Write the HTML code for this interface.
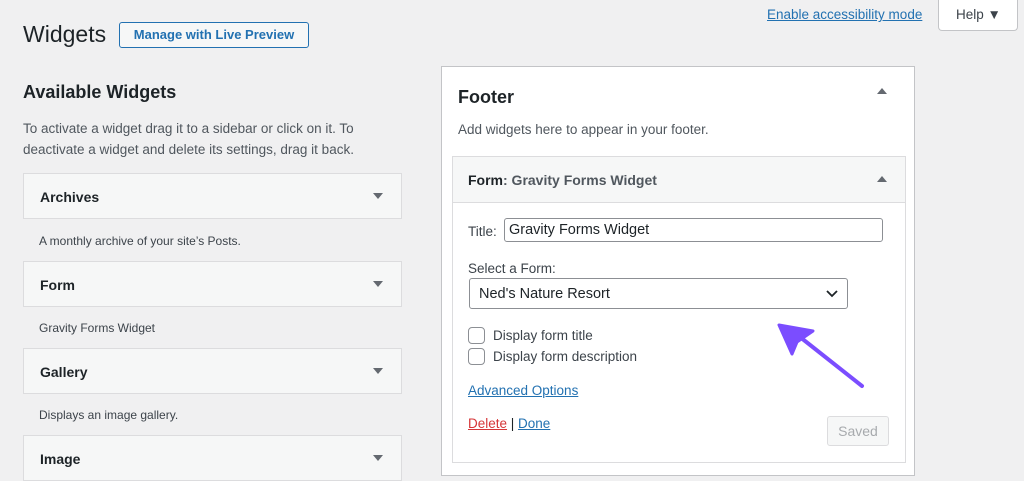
<!DOCTYPE html><html><head><style>
*{box-sizing:border-box;margin:0;padding:0}
body{width:1024px;height:469px;overflow:hidden;background:#f0f0f1;font-family:"Liberation Sans",sans-serif;color:#1d2327;position:relative;font-size:13px}
.a{position:absolute}
.box{position:absolute;left:23px;width:379px;height:46px;background:#f6f7f7;border:1px solid #dcdcde;font-weight:bold;font-size:14px;padding:15px 16px}
.box .t,.tri{position:absolute;width:0;height:0;border-left:5px solid transparent;border-right:5px solid transparent}
.box .t{right:18px;top:19px;border-top:6px solid #646970}
.up{border-bottom:6px solid #646970}
.desc{position:absolute;left:39px;font-size:12px;color:#3c434a}
a{color:#2271b1;text-decoration:underline}
.cb{position:absolute;left:468px;width:17px;height:17px;border:1px solid #8c8f94;border-radius:4px;background:#fff}
</style></head><body>
<div class="a" style="left:23px;top:21px;font-size:23px">Widgets</div>
<div class="a" style="left:119px;top:22px;width:190px;height:26px;border:1px solid #2271b1;border-radius:3px;color:#2271b1;font-size:13px;font-weight:bold;text-align:center;line-height:24px;background:#f6f7f7">Manage with Live Preview</div>
<a class="a" style="left:767px;top:7px;font-size:13.5px">Enable accessibility mode</a>
<div class="a" style="left:938px;top:-1px;width:80px;height:32px;background:#fff;border:1px solid #c3c4c7;border-top:none;border-radius:0 0 4px 4px;font-size:13.5px;padding:8px 0 0 17px;color:#3c434a">Help ▼</div>
<div class="a" style="left:23px;top:82px;font-size:18px;font-weight:bold">Available Widgets</div>
<div class="a" style="left:23px;top:118px;font-size:13.5px;color:#50575e;line-height:21px">To activate a widget drag it to a sidebar or click on it. To<br>deactivate a widget and delete its settings, drag it back.</div>
<div class="box" style="top:173px">Archives<span class="t"></span></div>
<div class="desc" style="top:234px">A monthly archive of your site’s Posts.</div>
<div class="box" style="top:261px">Form<span class="t"></span></div>
<div class="desc" style="top:321px">Gravity Forms Widget</div>
<div class="box" style="top:348px">Gallery<span class="t"></span></div>
<div class="desc" style="top:408px">Displays an image gallery.</div>
<div class="box" style="top:435px">Image<span class="t"></span></div>

<div class="a" style="left:441px;top:66px;width:474px;height:410px;background:#fff;border:1px solid #c3c4c7"></div>
<div class="a" style="left:458px;top:87px;font-size:18px;font-weight:bold">Footer</div>
<div class="a tri up" style="left:877px;top:88px"></div>
<div class="a" style="left:458px;top:122px;font-size:13.5px;color:#50575e">Add widgets here to appear in your footer.</div>
<div class="a" style="left:452px;top:156px;width:454px;height:307px;background:#fff;border:1px solid #dcdcde"></div>
<div class="a" style="left:453px;top:157px;width:452px;height:46px;background:#f6f7f7;border-bottom:1px solid #dcdcde"></div>
<div class="a" style="left:468px;top:172px;font-size:14px;font-weight:bold">Form<span style="color:#50575e">: Gravity Forms Widget</span></div>
<div class="a tri up" style="left:877px;top:176px"></div>
<div class="a" style="left:468px;top:224px;font-size:13.5px;color:#3c434a">Title:</div>
<div class="a" style="left:504px;top:218px;width:379px;height:24px;border:1px solid #8c8f94;border-radius:3px;font-size:14.5px;padding:3px 4px">Gravity Forms Widget</div>
<div class="a" style="left:468px;top:261px;font-size:13.5px;color:#3c434a">Select a Form:</div>
<div class="a" style="left:469px;top:278px;width:379px;height:31px;border:1px solid #8c8f94;border-radius:3px;font-size:14.5px;padding:7px 9px">Ned's Nature Resort
<svg style="position:absolute;right:9px;top:11px" width="12" height="8"><path d="M1 1l5 5 5-5" stroke="#1d2327" stroke-width="1.8" fill="none"/></svg></div>
<div class="cb" style="top:327px"></div>
<div class="a" style="left:493px;top:328px;font-size:13.5px;color:#3c434a">Display form title</div>
<div class="cb" style="top:348px"></div>
<div class="a" style="left:493px;top:349px;font-size:13.5px;color:#3c434a">Display form description</div>
<a class="a" style="left:468px;top:383px;font-size:13.5px">Advanced Options</a>
<div class="a" style="left:468px;top:416px;font-size:13.5px"><a style="color:#d63638">Delete</a> | <a>Done</a></div>
<div class="a" style="left:827px;top:416px;width:62px;height:30px;border:1px solid #dcdcde;border-radius:3px;background:#f6f7f7;color:#a7aaad;font-size:14px;text-align:center;line-height:28px">Saved</div>
<svg class="a" style="left:770px;top:315px" width="100" height="80"><path d="M92 71L30 22" stroke="#7b4dff" stroke-width="4" stroke-linecap="round"/><path d="M9 10L43 16 27 27 22 39Z" fill="#7b4dff" stroke="#7b4dff" stroke-width="3" stroke-linejoin="round"/></svg>
</body></html>
